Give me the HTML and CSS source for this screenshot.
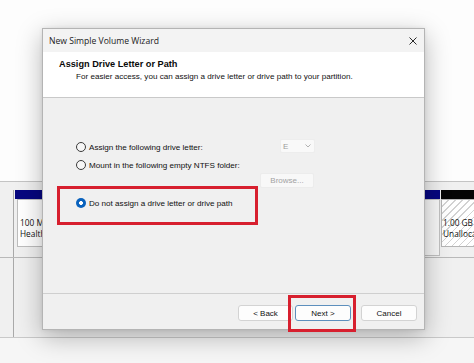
FILE: index.html
```html
<!DOCTYPE html>
<html lang="en">
<head>
<meta charset="utf-8">
<title>New Simple Volume Wizard</title>
<link rel="stylesheet" href="styles.css">
</head>
<body>
<div class="desktop">
  <div class="dm-top"></div>
  <div class="disk-row">
    <div class="disk-label"></div>
    <div class="part part-sys">
      <div class="part-bar"></div>
      <div class="part-body">100 MB<br>Healthy (EFI System Partition)</div>
    </div>
    <div class="part part-main">
      <div class="part-bar"></div>
      <div class="part-body"></div>
    </div>
    <div class="part part-free">
      <div class="part-bar"></div>
      <div class="part-body">1.00 GB<br>Unallocated</div>
    </div>
  </div>
  <div class="disk-row2">
    <div class="disk-label2"></div>
  </div>

  <div class="dialog">
    <div class="titlebar">
      <span class="title">New Simple Volume Wizard</span>
      <svg class="close" width="8" height="8" viewBox="0 0 8 8"><path d="M0.5 0.5 L7.5 7.5 M7.5 0.5 L0.5 7.5" stroke="#2b2b2b" stroke-width="1" fill="none"/></svg>
    </div>
    <div class="header">
      <div class="h-title">Assign Drive Letter or Path</div>
      <div class="h-sub">For easier access, you can assign a drive letter or drive path to your partition.</div>
    </div>
    <div class="panel">
      <div class="options">
        <div class="opt-row">
          <label class="radio-label"><span class="radio"></span>Assign the following drive letter:</label>
          <div class="combo"><span>E</span><svg width="6" height="4" viewBox="0 0 6 4"><path d="M0.5 0.5 L3 3 L5.5 0.5" stroke="#a8a8a8" stroke-width="0.9" fill="none"/></svg></div>
        </div>
        <div class="opt-row row2">
          <label class="radio-label"><span class="radio"></span>Mount in the following empty NTFS folder:</label>
        </div>
        <div class="browse-row">
          <div class="btn-disabled">Browse...</div>
        </div>
        <div class="opt-row row3">
          <label class="radio-label"><span class="radio on"></span>Do not assign a drive letter or drive path</label>
          <div class="annot annot-radio"></div>
        </div>
      </div>
    </div>
    <div class="footer">
      <div class="btn btn-back">&lt; Back</div>
      <div class="btn btn-next">Next &gt;<div class="annot annot-next"></div></div>
      <div class="btn btn-cancel">Cancel</div>
    </div>
  </div>
</div>
</body>
</html>
```
FILE: styles.css
```css
* { box-sizing: border-box; }
html, body { margin: 0; padding: 0; }
body {
  width: 474px;
  height: 363px;
  overflow: hidden;
  background: #f6f6f6;
  font-family: "Liberation Sans", Arial, sans-serif;
  color: #111;
}
.desktop {
  position: relative;
  width: 474px;
  height: 363px;
  overflow: hidden;
}
.dm-top {
  height: 182px;
  background: #fdfdfd;
  border-bottom: 1px solid #c4c4c4;
}
.disk-row {
  display: flex;
  gap: 1px;
  width: 560px;
  height: 76px;
  background: #f0f0f0;
  border-bottom: 1px solid #b9b9b9;
}
.disk-label {
  width: 14px;
  margin-top: 8px;
  border-right: 1px solid #a9a9a9;
}
.part {
  padding-top: 8px;
  display: flex;
  flex-direction: column;
}
.part-bar {
  height: 9px;
  background: #07077f;
}
.part-body {
  font-family: "Open Sans", "Liberation Sans", sans-serif;
  font-size: 8.3px;
  line-height: 10.5px;
  white-space: nowrap;
  color: #111;
}
.part-sys { width: 80px; }
.part-sys .part-body {
  height: 48px;
  margin-left: 2px;
  border: 1px solid #bdbdbd;
  background: #fff;
  padding: 18px 0 0 2px;
}
.part-main { width: 344px; }
.part-main .part-body {
  height: 57px;
  border: 1px solid #c0c0c0;
  background: #f7f7f7;
}
.part-free { width: 80px; }
.part-free .part-bar { background: #050505; }
.part-free .part-body {
  height: 48px;
  border: 1px solid #b5b5b5;
  padding: 18px 0 0 1px;
  overflow: hidden;
  background: repeating-linear-gradient(135deg, #ffffff 0 4px, #d2d2d2 4px 5px);
}
.disk-row2 {
  display: flex;
  height: 80px;
  background: #f0f0f0;
  border-bottom: 1px solid #c9c9c9;
}
.disk-label2 {
  width: 14px;
  border-right: 1px solid #a9a9a9;
}

/* dialog window */
.dialog {
  position: absolute;
  left: 42px;
  top: 28px;
  width: 383px;
  height: 302px;
  border: 1px solid #b4b4b4;
  background: #f0f0f0;
  display: flex;
  flex-direction: column;
  box-shadow: 0 7px 24px rgba(0, 0, 0, 0.28), 0 0 4px rgba(0, 0, 0, 0.08);
}
.titlebar {
  height: 23px;
  flex: none;
  background: #f3f3f3;
  display: flex;
  align-items: center;
  justify-content: space-between;
  padding: 0 7px 0 6px;
}
.title {
  font-family: "Open Sans", "Liberation Sans", sans-serif;
  font-size: 8.6px;
  color: #1a1a1a;
}
.close { display: block; }
.header {
  height: 46px;
  flex: none;
  background: #ffffff;
  border-bottom: 1px solid #c9c9c9;
  padding: 6px 0 0 16px;
}
.h-title {
  font-weight: 700;
  font-size: 9.2px;
  line-height: 12px;
  color: #0a0a0a;
}
.h-sub {
  font-size: 8.1px;
  line-height: 12px;
  margin-top: 1px;
  padding-left: 17px;
  color: #111;
}
.panel {
  flex: 1;
  padding: 42px 0 0 33px;
}
.options { width: 239px; }
.opt-row {
  display: flex;
  align-items: center;
  justify-content: space-between;
  height: 14px;
}
.row2 { margin-top: 4px; }
.row3 { margin-top: 8px; position: relative; }
.radio-label {
  display: flex;
  align-items: center;
  gap: 3px;
  font-size: 8.1px;
  color: #0f0f0f;
  white-space: nowrap;
}
.radio {
  width: 10px;
  height: 10px;
  border-radius: 50%;
  border: 1px solid #3a3a3a;
  background: #f6f6f6;
  flex: none;
}
.radio.on {
  border: none;
  background: radial-gradient(circle, #ffffff 0 1.7px, #0a62bd 2.2px);
}
.combo {
  width: 35px;
  height: 14px;
  margin-top: -2px;
  background: #f9f9f9;
  border: 1px solid #ededed;
  border-radius: 2px;
  display: flex;
  align-items: center;
  justify-content: space-between;
  padding: 0 3px 0 2px;
  font-size: 8px;
  color: #9a9a9a;
}
.combo svg { display: block; }
.browse-row {
  display: flex;
  justify-content: flex-end;
  margin-top: 1px;
  padding-right: 1px;
}
.btn-disabled {
  width: 54px;
  height: 15px;
  background: #f8f8f8;
  border: 1px solid #ececec;
  border-radius: 2px;
  font-size: 8px;
  color: #a2a2a2;
  display: flex;
  align-items: center;
  justify-content: center;
}
.annot {
  position: absolute;
  border: 3px solid #d71f2e;
  pointer-events: none;
}
.annot-radio {
  left: -19px;
  top: -10px;
  width: 201px;
  height: 39px;
}
.footer {
  height: 36px;
  flex: none;
  border-top: 1px solid #cfcfcf;
  display: flex;
  justify-content: flex-end;
  align-items: flex-start;
  padding: 11px 7px 0 0;
}
.btn {
  height: 16px;
  width: 56px;
  background: #fdfdfd;
  border: 1px solid #d3d3d3;
  border-radius: 3px;
  font-size: 8px;
  color: #111;
  display: flex;
  align-items: center;
  justify-content: center;
}
.btn-back { width: 55px; }
.btn-next {
  margin-left: 2px;
  position: relative;
  border-color: #5d8fbd;
}
.btn-cancel { margin-left: 10px; }
.annot-next {
  left: -8px;
  top: -11px;
  width: 68px;
  height: 37px;
}
```
